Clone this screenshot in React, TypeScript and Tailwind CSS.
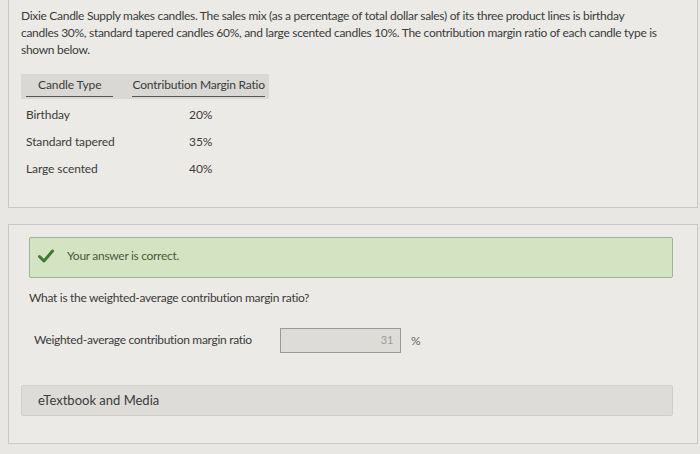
export default function App() {
  const rows = [
    { type: "Birthday", ratio: "20%" },
    { type: "Standard tapered", ratio: "35%" },
    { type: "Large scented", ratio: "40%" },
  ]

  return (
    <div className="w-[700px] h-[454px] bg-[#e8e7e3] text-[#3b3b3b] font-['Lato',sans-serif] overflow-hidden pl-2 pr-[2px]">
      {/* question panel */}
      <div className="h-[208px] border-x border-b border-[#c9c8c4] bg-[#ebeae6] px-3 pt-[7px]">
        <p className="text-[12px] leading-[17px] tracking-[-0.3px] whitespace-nowrap">
          Dixie Candle Supply makes candles. The sales mix (as a percentage of total dollar sales) of its three product lines is birthday
          <br />
          candles 30%, standard tapered candles 60%, and large scented candles 10%. The contribution margin ratio of each candle type is
          <br />
          shown below.
        </p>
        <table className="mt-[16px] text-[12px] tracking-[-0.1px] border-collapse">
          <thead>
            <tr className="bg-[#d9d8d4]">
              <th className="font-normal h-[25px] pl-[5px] pr-[19px] text-left">
                <span className="inline-block border-b border-[#555] pb-[2px] px-[12px]">Candle Type</span>
              </th>
              <th className="font-normal h-[25px] pr-[4px]">
                <span className="inline-block border-b border-[#555] pb-[2px] tracking-[-0.2px]">Contribution Margin Ratio</span>
              </th>
            </tr>
          </thead>
          <tbody>
            {rows.map((r) => (
              <tr key={r.type} className="h-[27px]">
                <td className="pl-[5px] pt-[5px]">{r.type}</td>
                <td className="text-center pt-[5px]">{r.ratio}</td>
              </tr>
            ))}
          </tbody>
        </table>
      </div>

      {/* answer panel */}
      <div className="mt-[16px] h-[220px] border border-[#c9c8c4] bg-[#ebeae6] pl-[20px] pr-[24px] pt-[12px] tracking-[-0.3px]">
        <div className="h-[41px] border border-[#9db48c] bg-[#d4e4c2] rounded-[2px] flex items-center pl-[8px] pb-[4px] gap-[13px]">
          <svg width="16" height="14" viewBox="0 0 16 14">
            <path d="M1.5 7.5 L6 12 L14.5 2" fill="none" stroke="#3f7a2e" strokeWidth="3" strokeLinecap="round" strokeLinejoin="round" />
          </svg>
          <span className="text-[12px] text-[#4a5a3e]">Your answer is correct.</span>
        </div>
        <p className="mt-[11px] text-[12px]">What is the weighted-average contribution margin ratio?</p>
        <div className="mt-[21px] flex items-center pl-[5px]">
          <span className="text-[12px] w-[246px] pb-[2px]">Weighted-average contribution margin ratio</span>
          <div className="w-[121px] h-[25px] border border-[#9a9995] bg-[#dddcd8] flex items-center justify-end pr-[7px] text-[11px] text-[#9a9a96]">
            31
          </div>
          <span className="ml-[10px] text-[12px] text-[#666]">%</span>
        </div>
        <div className="mt-[32px] -ml-[8px] h-[31px] border border-[#d0cfcb] bg-[#dddcd8] rounded-[2px] flex items-center pl-[16px] text-[13px] tracking-normal">
          eTextbook and Media
        </div>
      </div>
    </div>
  )
}
